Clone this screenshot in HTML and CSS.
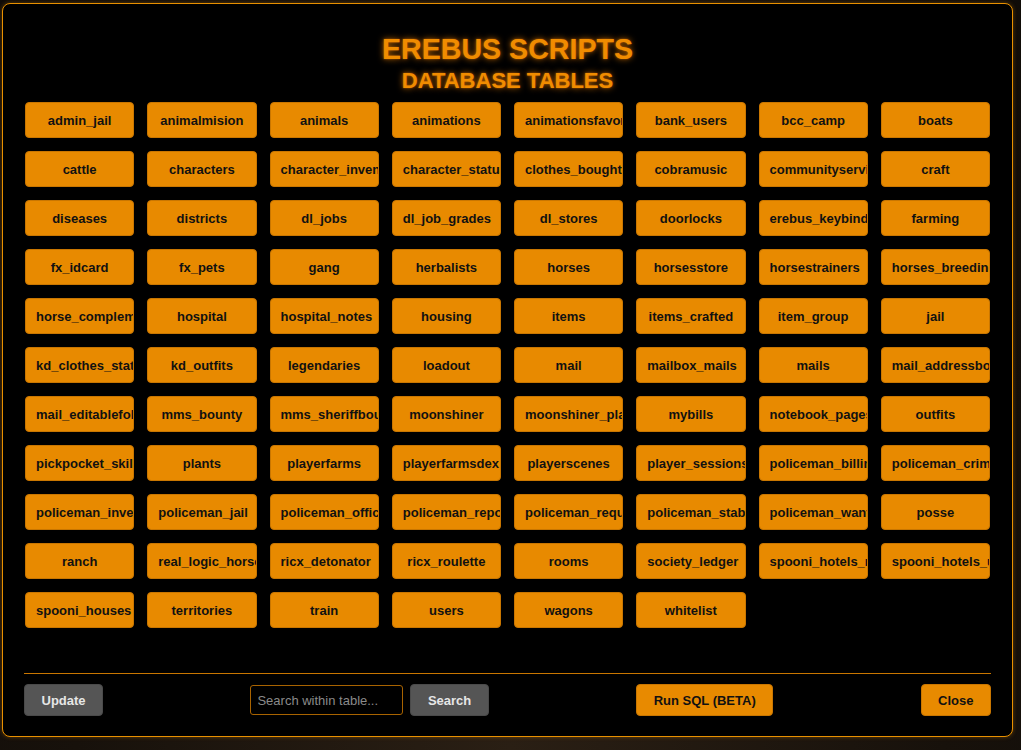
FILE: index.html
```html
<!DOCTYPE html>
<html lang="en">
<head>
<meta charset="utf-8">
<title>Erebus Scripts - Database Tables</title>
<link rel="stylesheet" href="styles.css">
</head>
<body>
<div class="panel">
  <header class="header">
    <h1 class="title">EREBUS SCRIPTS</h1>
    <h2 class="subtitle">DATABASE TABLES</h2>
  </header>
  <div class="grid">
    <button class="tbl">admin_jail</button>
    <button class="tbl">animalmision</button>
    <button class="tbl">animals</button>
    <button class="tbl">animations</button>
    <button class="tbl">animationsfavorites</button>
    <button class="tbl">bank_users</button>
    <button class="tbl">bcc_camp</button>
    <button class="tbl">boats</button>
    <button class="tbl">cattle</button>
    <button class="tbl">characters</button>
    <button class="tbl">character_inventories</button>
    <button class="tbl">character_status</button>
    <button class="tbl">clothes_bought</button>
    <button class="tbl">cobramusic</button>
    <button class="tbl">communityservice</button>
    <button class="tbl">craft</button>
    <button class="tbl">diseases</button>
    <button class="tbl">districts</button>
    <button class="tbl">dl_jobs</button>
    <button class="tbl">dl_job_grades</button>
    <button class="tbl">dl_stores</button>
    <button class="tbl">doorlocks</button>
    <button class="tbl">erebus_keybinds</button>
    <button class="tbl">farming</button>
    <button class="tbl">fx_idcard</button>
    <button class="tbl">fx_pets</button>
    <button class="tbl">gang</button>
    <button class="tbl">herbalists</button>
    <button class="tbl">horses</button>
    <button class="tbl">horsesstore</button>
    <button class="tbl">horsestrainers</button>
    <button class="tbl">horses_breeding</button>
    <button class="tbl">horse_complements</button>
    <button class="tbl">hospital</button>
    <button class="tbl">hospital_notes</button>
    <button class="tbl">housing</button>
    <button class="tbl">items</button>
    <button class="tbl">items_crafted</button>
    <button class="tbl">item_group</button>
    <button class="tbl">jail</button>
    <button class="tbl">kd_clothes_stats</button>
    <button class="tbl">kd_outfits</button>
    <button class="tbl">legendaries</button>
    <button class="tbl">loadout</button>
    <button class="tbl">mail</button>
    <button class="tbl">mailbox_mails</button>
    <button class="tbl">mails</button>
    <button class="tbl">mail_addressbook</button>
    <button class="tbl">mail_editablefolders</button>
    <button class="tbl">mms_bounty</button>
    <button class="tbl">mms_sheriffbounty</button>
    <button class="tbl">moonshiner</button>
    <button class="tbl">moonshiner_plants</button>
    <button class="tbl">mybills</button>
    <button class="tbl">notebook_pages</button>
    <button class="tbl">outfits</button>
    <button class="tbl">pickpocket_skills</button>
    <button class="tbl">plants</button>
    <button class="tbl">playerfarms</button>
    <button class="tbl">playerfarmsdex</button>
    <button class="tbl">playerscenes</button>
    <button class="tbl">player_sessions</button>
    <button class="tbl">policeman_billing</button>
    <button class="tbl">policeman_crimes</button>
    <button class="tbl">policeman_inventory</button>
    <button class="tbl">policeman_jail</button>
    <button class="tbl">policeman_officers</button>
    <button class="tbl">policeman_reports</button>
    <button class="tbl">policeman_requests</button>
    <button class="tbl">policeman_stables</button>
    <button class="tbl">policeman_wanted</button>
    <button class="tbl">posse</button>
    <button class="tbl">ranch</button>
    <button class="tbl">real_logic_horses</button>
    <button class="tbl">ricx_detonator</button>
    <button class="tbl">ricx_roulette</button>
    <button class="tbl">rooms</button>
    <button class="tbl">society_ledger</button>
    <button class="tbl">spooni_hotels_rooms</button>
    <button class="tbl">spooni_hotels_users</button>
    <button class="tbl">spooni_houses</button>
    <button class="tbl">territories</button>
    <button class="tbl">train</button>
    <button class="tbl">users</button>
    <button class="tbl">wagons</button>
    <button class="tbl">whitelist</button>
  </div>
  <footer class="footer">
    <button class="btn btn-grey">Update</button>
    <div class="search">
      <input class="search-input" type="text" placeholder="Search within table..." autofocus>
      <button class="btn btn-grey">Search</button>
    </div>
    <button class="btn btn-orange">Run SQL (BETA)</button>
    <button class="btn btn-orange">Close</button>
  </footer>
</div>
</body>
</html>
```
FILE: styles.css
```css
html, body {
  margin: 0;
  padding: 0;
  height: 100%;
}
body {
  background: radial-gradient(ellipse at 50% 100%, #2a1f14 0%, #17110b 60%, #100c08 100%);
  font-family: "Liberation Sans", Arial, sans-serif;
  overflow: hidden;
}
.panel {
  box-sizing: border-box;
  width: 1011px;
  height: 734px;
  margin: 3px 0 0 2px;
  background: #000;
  border: 1px solid #e89000;
  border-radius: 8px;
  box-shadow: 0 0 4px rgba(232, 144, 0, 0.35);
  padding: 20px 21px 20px 21px;
  display: flex;
  flex-direction: column;
}
.header {
  padding-top: 8px;
  text-align: center;
}
.title {
  margin: 0;
  font-size: 28.6px;
  line-height: 34px;
  font-weight: bold;
  color: #f08c00;
  text-shadow: 0 0 6px rgba(255, 140, 0, 0.7), 0 0 2px rgba(255, 120, 0, 0.55);
}
.subtitle {
  margin: 2px 0 0;
  font-size: 22px;
  line-height: 26px;
  font-weight: bold;
  color: #f08c00;
  text-shadow: 0 0 6px rgba(255, 140, 0, 0.7), 0 0 2px rgba(255, 120, 0, 0.55);
}
.grid {
  margin-top: 8px;
  flex: 1;
  display: grid;
  grid-template-columns: repeat(8, 1fr);
  grid-auto-rows: 36px;
  gap: 13px;
  align-content: start;
  padding: 0 1px;
}
.tbl {
  box-sizing: border-box;
  height: 36px;
  min-width: 0;
  background: #e88a00;
  border: 1px solid #c97600;
  border-radius: 4px;
  color: #111;
  font-family: "Liberation Sans", Arial, sans-serif;
  font-weight: bold;
  font-size: 13px;
  padding: 0 10px;
  text-align: center;
  white-space: nowrap;
  overflow: hidden;
  cursor: pointer;
}
.footer {
  border-top: 1px solid #c97600;
  padding-top: 10px;
  display: flex;
  justify-content: space-between;
  align-items: center;
}
.search {
  display: flex;
  gap: 7px;
  align-items: center;
}
.btn {
  box-sizing: border-box;
  height: 32px;
  border-radius: 4px;
  font-family: "Liberation Sans", Arial, sans-serif;
  font-weight: bold;
  font-size: 13px;
  padding: 0 16.5px;
  cursor: pointer;
}
.btn-grey {
  background: #555;
  border: 1px solid #4a4a4a;
  color: #e6e6e6;
}
.btn-orange {
  background: #e88a00;
  border: 1px solid #c97600;
  color: #111;
}
.search-input {
  box-sizing: border-box;
  width: 153px;
  height: 30px;
  background: #000;
  border: 1px solid #a86300;
  border-radius: 3px;
  color: #ddd;
  caret-color: #e88a00;
  font-family: "Liberation Sans", Arial, sans-serif;
  font-size: 13px;
  padding: 0 6px;
  outline: none;
}
.search-input::placeholder {
  color: #8a8a8a;
}
```
